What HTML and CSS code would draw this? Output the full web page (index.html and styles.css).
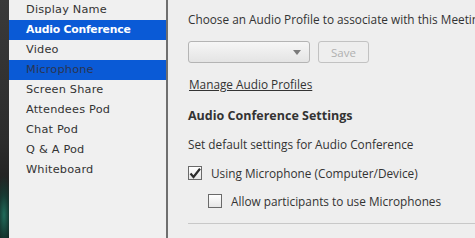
FILE: index.html
```html
<!DOCTYPE html>
<html lang="en">
<head>
  <meta charset="UTF-8">
  <meta name="viewport" content="width=device-width, initial-scale=1.0">
  <title>Audio Conference</title>
  <link rel="stylesheet" href="styles.css">
</head>
<body>
  <div class="window">
    <div class="backdrop"></div>

    <ul class="side-menu">
      <li>Display Name</li>
      <li class="selected">Audio Conference</li>
      <li>Video</li>
      <li class="hover">Microphone</li>
      <li>Screen Share</li>
      <li>Attendees Pod</li>
      <li>Chat Pod</li>
      <li>Q &amp; A Pod</li>
      <li>Whiteboard</li>
    </ul>

    <div class="panel">
      <p class="intro">Choose an Audio Profile to associate with this Meeting</p>
      <div class="profile-row">
        <div class="combo">
          <svg class="combo-arrow" width="8" height="5" viewBox="0 0 8 5"><path d="M0 0 H8 L4 5 Z" fill="#7a7a7a"/></svg>
        </div>
        <button class="btn" disabled>Save</button>
      </div>
      <a class="manage-link" href="#">Manage Audio Profiles</a>

      <h3 class="section-title">Audio Conference Settings</h3>
      <p class="section-desc">Set default settings for Audio Conference</p>

      <label class="check-row">
        <span class="box">
          <svg width="12" height="11" viewBox="0 0 12 11"><path d="M1.5 5.5 L4.5 9 L11 0.8" fill="none" stroke="#2b2b2b" stroke-width="2.2"/></svg>
        </span>
        Using Microphone (Computer/Device)
      </label>
      <label class="check-row sub">
        <span class="box"></span>
        Allow participants to use Microphones
      </label>

      <hr class="divider">

      <label class="check-row">
        <span class="box"></span>
        Using Telephony
      </label>
    </div>
  </div>
</body>
</html>
```

FILE: styles.css
```css
html, body {
  margin: 0;
  padding: 0;
  overflow: hidden;
}

body {
  width: 475px;
  height: 238px;
  background: #eeeeee;
  color: #333333;
}

.window {
  display: flex;
  height: 238px;
}

.backdrop {
  width: 9px;
  flex-shrink: 0;
  background:
    radial-gradient(ellipse 10px 40px at 4px 215px, #1f6b5a 0%, #163a33 50%, transparent 100%),
    linear-gradient(#3a3a3a, #2c2c2c 60%, #141414);
}

.side-menu {
  list-style: none;
  margin: 0;
  padding: 0;
  width: 157px;
  flex-shrink: 0;
  background: #f0f0f0;
  border-right: 2px solid #6f6f6f;
  font-family: "DejaVu Sans", sans-serif;
  font-size: 11.3px;
  letter-spacing: 0.2px;
}

.side-menu li {
  height: 20px;
  line-height: 20px;
  padding-left: 17px;
  white-space: nowrap;
}

.side-menu .selected {
  background: #0a5ad6;
  color: #ffffff;
  font-weight: bold;
  font-size: 10.8px;
  letter-spacing: -0.2px;
}

.side-menu .hover {
  background: #0a5ad6;
  color: #2b3550;
}

.panel {
  flex: 1;
  padding-left: 20px;
  font-family: "Open Sans", sans-serif;
  font-size: 11.8px;
  white-space: nowrap;
  overflow: hidden;
}

.intro {
  margin: 11px 0 0;
  line-height: 16px;
}

.profile-row {
  display: flex;
  gap: 8px;
  margin-top: 14px;
}

.combo {
  width: 120px;
  height: 20px;
  border: 1px solid #b4b4b4;
  border-radius: 3px;
  background: linear-gradient(#f6f6f6, #e4e4e4);
  position: relative;
}

.combo-arrow {
  position: absolute;
  right: 8px;
  top: 8px;
}

.btn {
  width: 51px;
  height: 22px;
  border: 1px solid #c2c2c2;
  border-radius: 3px;
  background: #eeeeee;
  color: #b0b0b0;
  font-family: inherit;
  font-size: 11.5px;
  padding: 0;
}

.manage-link {
  display: inline-block;
  margin-top: 13px;
  margin-left: 1px;
  color: #333333;
  line-height: 16px;
}

.section-title {
  margin: 16px 0 0;
  font-size: 12.5px;
  line-height: 16px;
}

.section-desc {
  margin: 12px 0 0;
  line-height: 16px;
}

.check-row {
  display: flex;
  align-items: center;
  gap: 9px;
  height: 14px;
  margin-top: 14px;
}

.check-row.sub {
  margin-left: 20px;
}

.box {
  width: 12px;
  height: 12px;
  border: 1px solid #6a6a6a;
  background: linear-gradient(#ffffff, #e6e6e6);
  display: flex;
  align-items: center;
  justify-content: center;
  flex-shrink: 0;
}

.divider {
  border: none;
  border-top: 1px solid #c8c8c8;
  margin: 15px 0 0;
}
```
